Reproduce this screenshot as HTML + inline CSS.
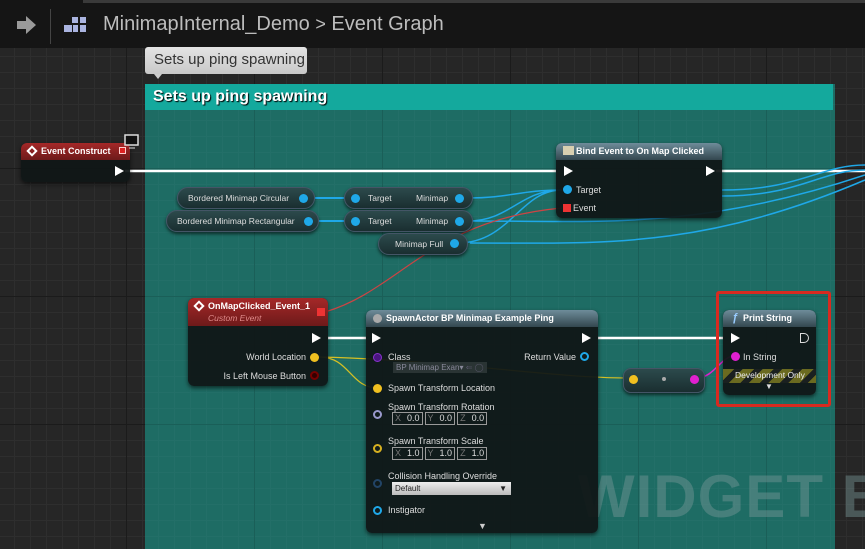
<!DOCTYPE html><html style="width:865px;height:549px;overflow:hidden"><head><style>
*{margin:0;padding:0;box-sizing:border-box}
body{width:865px;height:549px;overflow:hidden;position:relative;background:#262626;font-family:"Liberation Sans",sans-serif;white-space:nowrap;
background-image:linear-gradient(#1b1b1b 1px,transparent 1px),linear-gradient(90deg,#1b1b1b 1px,transparent 1px),linear-gradient(#2e2e2e 1px,transparent 1px),linear-gradient(90deg,#2e2e2e 1px,transparent 1px);
background-size:128px 128px,128px 128px,16px 16px,16px 16px;background-position:-2px 40px,-2px 40px,-2px 40px,-2px 40px}
.a{position:absolute}
.top{left:0;top:0;width:865px;height:48px;background:#151515}
.comment{left:145px;top:84px;width:690px;height:465px;background:#1e6c64;
background-image:linear-gradient(#1a5f58 1px,transparent 1px),linear-gradient(90deg,#1a5f58 1px,transparent 1px),linear-gradient(#236f68 1px,transparent 1px),linear-gradient(90deg,#236f68 1px,transparent 1px);
background-size:128px 128px,128px 128px,16px 16px,16px 16px;background-position:-147px -44px,-147px -44px,-147px -44px,-147px -44px}
.chead{left:145px;top:84px;width:688px;height:26px;background:#14a99d;color:#fff;font-weight:bold;font-size:16px;padding:4px 0 0 8px;text-shadow:1px 1px 1px #000}
.node{background:rgba(16,22,22,.94);border-radius:6px;box-shadow:0 2px 4px rgba(0,0,0,.6);color:#ddd;font-size:9px}
.hd{height:17px;border-radius:6px 6px 0 0;font-weight:bold;font-size:9px;color:#fff;padding:3px 0 0 20px}
.red{background:linear-gradient(#a52828,#6d1a1a)}
.blu{background:linear-gradient(#6e8c9a,#33474f)}
.var{background:linear-gradient(#2c4a4c,#1a2e30);border-radius:11px;color:#ddd;font-size:8.5px;box-shadow:0 2px 3px rgba(0,0,0,.6);border:1px solid #456}
.pin{position:absolute;width:9px;height:9px;border-radius:50%}
.ex{position:absolute;width:0;height:0;border-left:9px solid #fff;border-top:5px solid transparent;border-bottom:5px solid transparent}
.box{display:inline-block;border:1px solid #999;height:13px;font-size:9px;padding:0 2px;margin-right:2px;color:#ddd}
.box i{color:#777;font-style:normal;margin-right:6px}
</style></head><body>
<div class="a top"></div>
<div class="a" style="left:83px;top:0;width:782px;height:3px;background:#3a3a3a"></div>
<svg class="a" style="left:15px;top:13px" width="24" height="24"><path d="M2 8h9V3l10 9-10 9v-5H2z" fill="#9a9a9a"/></svg>
<div class="a" style="left:50px;top:9px;width:1px;height:35px;background:#444"></div>
<svg class="a" style="left:62px;top:16px" width="26" height="18"><rect x="10" y="1" width="6" height="6" fill="#aab4e0"/><rect x="18" y="1" width="6" height="6" fill="#aab4e0"/><rect x="2" y="9" width="8" height="7" fill="#aab4e0"/><rect x="11" y="9" width="5" height="7" fill="#aab4e0"/><rect x="18" y="9" width="6" height="7" fill="#aab4e0"/></svg>
<div class="a" style="left:103px;top:13px;font-size:20px;color:#bdbdbd">MinimapInternal_Demo <span style="font-size:18px">&gt;</span> Event Graph</div>

<div class="a comment"></div>
<div class="a chead">Sets up ping spawning</div>
<div class="a" style="left:145px;top:47px;width:162px;height:27px;background:linear-gradient(#e4e4e4,#c8c8c8);border-radius:3px;color:#333;font-size:15px;padding:4px 0 0 9px">Sets up ping spawning</div>
<div class="a" style="left:154px;top:74px;border-top:5px solid #ccc;border-left:4px solid transparent;border-right:4px solid transparent"></div>

<div class="a" style="left:578px;top:462px;font-size:60px;font-weight:bold;color:rgba(120,150,150,.45);letter-spacing:1px">WIDGET BL</div>

<svg class="a" style="left:0;top:0" width="865" height="549" fill="none">
<path d="M125 171H556M716 171H865" stroke="#fff" stroke-width="2.5"/>
<path d="M328 338H366M598 338H723" stroke="#fff" stroke-width="2.5"/>
<path d="M315 198H349M319 221H349" stroke="#1fa8e8" stroke-width="2"/>
<path d="M468 198C510 198 520 190 562 190M468 221C510 221 520 190 562 190M458 243C510 243 520 190 562 190" stroke="#1fa8e8" stroke-width="1.5"/>
<path d="M722 190C800 190 820 165 865 165M722 196C800 196 820 170 865 170M470 243C600 243 700 250 865 180M472 221C600 221 700 230 865 175" stroke="#1fa8e8" stroke-width="1.5"/>
<path d="M325 312C400 290 430 220 562 208" stroke="#c44" stroke-width="1.2"/>
<path d="M319 357C350 357 350 388 378 388M319 357C450 360 550 378 628 378" stroke="#d6c024" stroke-width="1.2"/>
<path d="M696 378C715 378 720 356 735 356" stroke="#e020d0" stroke-width="1.5"/>
</svg>

<div class="a node" style="left:21px;top:143px;width:109px;height:39px"><div class="hd red">Event Construct</div></div>
<div class="a" style="left:28px;top:147px;width:8px;height:8px;border:2px solid #fff;transform:rotate(45deg)"></div>
<div class="a" style="left:119px;top:147px;width:7px;height:7px;background:#d22;border:1px solid #fcc"></div>
<svg class="a" style="left:120px;top:134px" width="20" height="16"><rect x="5" y="1" width="13" height="10" fill="#111" stroke="#ddd" stroke-width="1.5"/><path d="M9 14h6" stroke="#ddd"/></svg>
<div class="ex" style="left:115px;top:166px"></div>

<div class="a var" style="left:177px;top:187px;width:138px;height:22px;padding:5px 0 0 10px">Bordered Minimap Circular</div>
<div class="pin" style="left:299px;top:194px;background:#1fa8e8"></div>
<div class="a var" style="left:166px;top:210px;width:153px;height:22px;padding:5px 0 0 10px">Bordered Minimap Rectangular</div>
<div class="pin" style="left:304px;top:217px;background:#1fa8e8"></div>
<div class="a var" style="left:344px;top:187px;width:129px;height:22px;padding:5px 0 0 23px">Target<span style="position:absolute;left:71px">Minimap</span></div>
<div class="pin" style="left:351px;top:194px;background:#1fa8e8"></div><div class="pin" style="left:455px;top:194px;background:#1fa8e8"></div>
<div class="a var" style="left:344px;top:210px;width:129px;height:22px;padding:5px 0 0 23px">Target<span style="position:absolute;left:71px">Minimap</span></div>
<div class="pin" style="left:351px;top:217px;background:#1fa8e8"></div><div class="pin" style="left:455px;top:217px;background:#1fa8e8"></div>
<div class="a var" style="left:378px;top:233px;width:90px;height:22px;padding:5px 0 0 16px">Minimap Full</div>
<div class="pin" style="left:450px;top:239px;background:#1fa8e8"></div>

<div class="a node" style="left:556px;top:143px;width:166px;height:75px"><div class="hd blu">Bind Event to On Map Clicked</div>
<div class="a" style="left:20px;top:42px">Target</div><div class="a" style="left:17px;top:60px">Event</div></div>
<div class="a" style="left:563px;top:146px;width:11px;height:9px;background:#d8cfb0"></div>
<div class="ex" style="left:564px;top:166px"></div><div class="ex" style="left:706px;top:166px"></div>
<div class="pin" style="left:563px;top:185px;background:#1fa8e8"></div>
<div class="a" style="left:563px;top:204px;width:8px;height:8px;background:#e33"></div>

<div class="a node" style="left:188px;top:298px;width:140px;height:88px"><div class="hd red" style="height:28px">OnMapClicked_Event_1<div style="font-weight:normal;font-style:italic;color:#e08a8a;font-size:8.5px;margin-top:2px">Custom Event</div></div>
<div class="a" style="right:22px;top:54px">World Location</div><div class="a" style="right:22px;top:73px">Is Left Mouse Button</div></div>
<div class="a" style="left:195px;top:302px;width:8px;height:8px;border:2px solid #fff;transform:rotate(45deg)"></div>
<div class="a" style="left:317px;top:308px;width:8px;height:8px;background:#e33"></div>
<div class="ex" style="left:312px;top:333px"></div>
<div class="pin" style="left:310px;top:353px;background:#f0c020"></div>
<div class="pin" style="left:310px;top:371px;border:2px solid #700;background:#300"></div>

<div class="a node" style="left:366px;top:310px;width:232px;height:223px"><div class="hd blu">SpawnActor BP Minimap Example Ping</div>
<div class="a" style="left:22px;top:42px">Class</div>
<div class="a" style="left:27px;top:52px;background:#2a3434;color:#889;font-size:8px;padding:1px 3px">BP Minimap Exan▾ <span style="color:#556">⇐ ◯</span></div>
<div class="a" style="right:22px;top:42px">Return Value</div>
<div class="a" style="left:22px;top:73px">Spawn Transform Location</div>
<div class="a" style="left:22px;top:92px">Spawn Transform Rotation</div>
<div class="a" style="left:26px;top:102px"><span class="box"><i>X</i>0.0</span><span class="box"><i>Y</i>0.0</span><span class="box"><i>Z</i>0.0</span></div>
<div class="a" style="left:22px;top:126px">Spawn Transform Scale</div>
<div class="a" style="left:26px;top:137px"><span class="box"><i>X</i>1.0</span><span class="box"><i>Y</i>1.0</span><span class="box"><i>Z</i>1.0</span></div>
<div class="a" style="left:22px;top:161px">Collision Handling Override</div>
<div class="a" style="left:26px;top:172px;width:119px;height:13px;background:linear-gradient(#eee,#bbb);color:#222;font-size:8px;padding:2px 3px">Default<span style="position:absolute;right:4px">▼</span></div>
<div class="a" style="left:22px;top:195px">Instigator</div>
<div class="a" style="left:112px;top:211px;color:#ccc;font-size:9px">▼</div></div>
<div class="a" style="left:373px;top:314px;width:9px;height:9px;border-radius:50%;background:#aaa"></div>
<div class="ex" style="left:372px;top:333px"></div><div class="ex" style="left:582px;top:333px"></div>
<div class="pin" style="left:373px;top:353px;background:#4a1580;border:1px solid #83c"></div>
<div class="pin" style="left:580px;top:352px;border:2px solid #1fa8e8"></div>
<div class="pin" style="left:373px;top:384px;background:#f0c020"></div>
<div class="pin" style="left:373px;top:410px;border:2px solid #99c"></div>
<div class="pin" style="left:373px;top:444px;border:2px solid #d6b020"></div>
<div class="pin" style="left:373px;top:479px;border:2px solid #246"></div>
<div class="pin" style="left:373px;top:506px;border:2px solid #1fa8e8"></div>

<div class="a var" style="left:623px;top:368px;width:82px;height:25px;border-radius:8px"></div>
<div class="pin" style="left:629px;top:375px;background:#f0c020"></div>
<div class="a" style="left:662px;top:377px;width:4px;height:4px;border-radius:50%;background:#aaa"></div>
<div class="pin" style="left:690px;top:375px;background:#e020d0"></div>

<div class="a" style="left:716px;top:291px;width:115px;height:116px;border:3px solid #d82a20;border-radius:3px"></div>
<div class="a node" style="left:723px;top:310px;width:93px;height:85px;overflow:hidden"><div class="hd blu">Print String</div>
<div class="a" style="left:20px;top:42px">In String</div>
<div class="a" style="left:0;top:59px;width:93px;height:14px;background:repeating-linear-gradient(135deg,#6a6a20 0 8px,#1a2020 8px 14px)"></div>
<div class="a" style="left:12px;top:60px;color:#eee;font-size:8.5px">Development Only</div>
<div class="a" style="left:42px;top:72px;font-size:8px">▼</div></div>
<div class="a" style="left:732px;top:312px;color:#9cf;font-style:italic;font-weight:bold;font-size:11px">ƒ</div>
<div class="ex" style="left:731px;top:333px"></div>
<div class="a" style="left:800px;top:333px;width:9px;height:10px;border:1.5px solid #ddd;border-radius:0 5px 5px 0"></div>
<div class="pin" style="left:731px;top:352px;background:#e020d0"></div>
</body></html>
